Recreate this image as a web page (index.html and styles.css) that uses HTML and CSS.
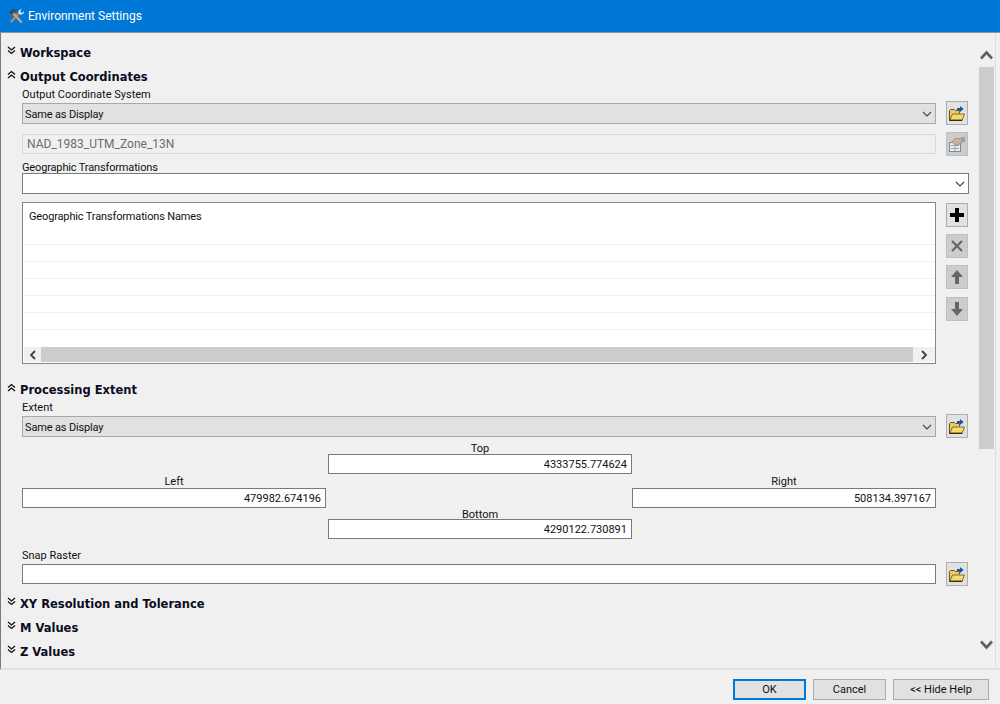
FILE: index.html
```html
<!DOCTYPE html>
<html lang="en">
<head>
<meta charset="utf-8">
<title>Environment Settings</title>
<link rel="stylesheet" href="styles.css">
</head>
<body>
<svg class="defs" width="0" height="0" aria-hidden="true">
  <defs>
    <symbol id="chev-down" viewBox="0 0 9 9"><path d="M1 1l3.500 3L8 1M1 4.500l3.500 3 3.500-3" fill="none" stroke="#111" stroke-width="1.300"/></symbol>
    <symbol id="chev-up" viewBox="0 0 9 9"><path d="M1 4.500l3.500-3L8 4.500M1 8l3.500-3L8 8" fill="none" stroke="#111" stroke-width="1.300"/></symbol>
    <symbol id="caret" viewBox="0 0 10 6"><path d="M1 1l4 4 4-4" fill="none" stroke="#444" stroke-width="1.100"/></symbol>
    <symbol id="folder" viewBox="0 0 16 15">
      <path d="M.5 14.500V4.500l1-1h4l1 1h4v3" fill="#e8cc70" stroke="#6b5210"/>
      <path d="M.8 14.500L3.500 8H15.500l-2.500 6.500z" fill="#f6da6c" stroke="#6b5210" stroke-width=".8"/>
      <path d="M.5 14.300h12.700" stroke="#3a2a06" stroke-width="1.400"/>
      <path d="M11 0l3.700 3L11 6V4.200H8V1.900h3z" fill="#0d5ba8"/>
    </symbol>
  </defs>
</svg>
<div class="window">
  <header class="titlebar">
    <svg class="app-icon" width="16" height="16" viewBox="0 0 17 17">
      <path d="M3 15L13 4" stroke="#b98a55" stroke-width="2.400"/>
      <path d="M14.500 15.500L5 5" stroke="#d8a070" stroke-width="2.400"/>
      <path d="M1 5l3-3.500h4.500L11 3 7 4 4.500 7z" fill="#44464a"/>
      <path d="M11.500 2.500l3-1.500-1.500 3 1.500 1.500 2.500-2c.3 2-1.500 4-4 3.500L11 5z" fill="#e8ecef"/>
    </svg>
    <span class="title">Environment Settings</span>
  </header>
  <div class="body">
    <main class="panel">
      <h2 class="section section-first"><svg class="chev"><use href="#chev-down"/></svg>Workspace</h2>
      <h2 class="section section-next"><svg class="chev"><use href="#chev-up"/></svg>Output Coordinates</h2>
      <div class="group">
        <div class="label label-top">Output Coordinate System</div>
        <div class="row">
          <div class="combo grey"><span class="tight">Same as Display</span><svg class="caret"><use href="#caret"/></svg></div>
          <button class="tool"><svg class="ico"><use href="#folder"/></svg></button>
        </div>
        <div class="row row-disabled">
          <div class="field disabled">NAD_1983_UTM_Zone_13N</div>
          <button class="tool off">
            <svg class="ico" viewBox="0 0 16 15">
              <rect x=".5" y="5.500" width="11" height="9" fill="#e6ecf0" stroke="#7f8a94"/>
              <path d="M2 8.500h8M2 11.500h8M6 6v8" stroke="#9aa6b0"/>
              <path d="M3 5l3-3.500h5l2-.5v5l-2 1-3 1.500-3-1.500z" fill="#c4b299" stroke="#8f8068" stroke-width=".6"/>
              <path d="M13 0h3v5h-3z" fill="#7ba9c8"/>
            </svg>
          </button>
        </div>
        <div class="label label-geo tight">Geographic Transformations</div>
        <div class="combo white wide"><span></span><svg class="caret"><use href="#caret"/></svg></div>
        <div class="row row-list">
          <div class="list">
            <div class="list-head tight">Geographic Transformations Names</div>
            <div class="list-line"></div>
            <div class="list-line"></div>
            <div class="list-line"></div>
            <div class="list-line"></div>
            <div class="list-line"></div>
            <div class="hscroll">
              <span class="hbtn hbtn-left"><svg width="8" height="10" viewBox="0 0 8 10"><path d="M6 1L2 5l4 4" fill="none" stroke="#404040" stroke-width="1.800"/></svg></span>
              <div class="hthumb"></div>
              <span class="hbtn hbtn-right"><svg width="8" height="10" viewBox="0 0 8 10"><path d="M2 1l4 4-4 4" fill="none" stroke="#404040" stroke-width="1.800"/></svg></span>
            </div>
          </div>
          <div class="tools">
            <button class="tool">
              <svg class="ico-lg" viewBox="0 0 18 18"><path d="M7 2h4v5h5v4h-5v5H7v-5H2V7h5z" fill="#000"/></svg>
            </button>
            <button class="tool off">
              <svg class="ico-lg" viewBox="0 0 18 18"><path d="M4 4l10 10M14 4L4 14" stroke="#666" stroke-width="2.200"/></svg>
            </button>
            <button class="tool off">
              <svg class="ico-lg" viewBox="0 0 18 18"><path d="M9 2l6 7h-4v7H7V9H3z" fill="#666"/></svg>
            </button>
            <button class="tool off tool-last">
              <svg class="ico-lg" viewBox="0 0 18 18"><path d="M9 16l6-7h-4V2H7v7H3z" fill="#666"/></svg>
            </button>
          </div>
        </div>
      </div>
      <h2 class="section section-extent"><svg class="chev"><use href="#chev-up"/></svg>Processing Extent</h2>
      <div class="group">
        <div class="label label-top">Extent</div>
        <div class="row">
          <div class="combo grey"><span class="tight">Same as Display</span><svg class="caret"><use href="#caret"/></svg></div>
          <button class="tool"><svg class="ico"><use href="#folder"/></svg></button>
        </div>
        <div class="extent">
          <div class="cell cell-top"><div class="cap">Top</div><div class="field num">4333755.774624</div></div>
          <div class="cell cell-left"><div class="cap">Left</div><div class="field num">479982.674196</div></div>
          <div class="cell cell-right"><div class="cap">Right</div><div class="field num">508134.397167</div></div>
          <div class="cell cell-bottom"><div class="cap">Bottom</div><div class="field num">4290122.730891</div></div>
        </div>
        <div class="label label-snap">Snap Raster</div>
        <div class="row">
          <div class="field snap"></div>
          <button class="tool"><svg class="ico"><use href="#folder"/></svg></button>
        </div>
      </div>
      <h2 class="section section-xy"><svg class="chev"><use href="#chev-down"/></svg>XY Resolution and Tolerance</h2>
      <h2 class="section section-next"><svg class="chev"><use href="#chev-down"/></svg>M Values</h2>
      <h2 class="section section-next"><svg class="chev"><use href="#chev-down"/></svg>Z Values</h2>
    </main>
    <aside class="vscroll">
      <svg class="varrow" width="15" height="10" viewBox="0 0 15 10"><path d="M2 8.500l5.500-6 5.500 6" fill="none" stroke="#606060" stroke-width="2.600"/></svg>
      <div class="vtrack"><div class="vthumb"></div></div>
      <svg class="varrow" width="15" height="10" viewBox="0 0 15 10"><path d="M2 1.500l5.500 6 5.500-6" fill="none" stroke="#606060" stroke-width="2.600"/></svg>
    </aside>
  </div>
  <footer class="footer">
    <button class="btn primary">OK</button>
    <button class="btn">Cancel</button>
    <button class="btn help">&lt;&lt; Hide Help</button>
  </footer>
</div>
</body>
</html>
```

FILE: styles.css
```css
* { box-sizing: border-box; }
html, body { margin: 0; height: 100%; }
body {
  width: 1000px;
  height: 704px;
  overflow: hidden;
  background: #f0f0f0;
  font-family: Roboto, "Noto Sans", sans-serif;
  font-size: 11px;
  color: #111;
}
.defs { position: absolute; }
.window { display: flex; flex-direction: column; height: 704px; }
.tight { letter-spacing: -0.150px; }

.titlebar {
  height: 33px;
  flex: none;
  display: flex;
  align-items: center;
  gap: 4px;
  padding: 0 0 0 8px;
  background: #0078d7;
  border-bottom: 1px solid #8a98a4;
  color: #fff;
}
.title { font-size: 12px; }

.body {
  height: 637px;
  flex: none;
  display: flex;
  border-left: 1px solid #7a7a7a;
  border-bottom: 2px solid #e2e2e2;
}
.panel { width: 975px; flex: none; padding: 0 0 0 6px; }

.section {
  margin: 0;
  display: flex;
  align-items: center;
  height: 14px;
  padding-top: 1px;
  font-family: "DejaVu Sans", sans-serif;
  font-size: 11.500px;
  font-weight: 700;
  color: #0b0b1e;
}
.section-first { margin-top: 12px; }
.section-next { margin-top: 10px; }
.section-extent { margin-top: 18px; }
.section-xy { margin-top: 10px; }
.chev { width: 9px; height: 9px; margin: -4px 4px 0 0; flex: none; }

.group { padding-left: 15px; }
.label { height: 14px; line-height: 14px; padding-top: 1px; }
.label-top { margin-top: 4px; }
.label-geo { margin-top: 4px; height: 13px; }
.label-snap { margin-top: 9px; }

.row { display: flex; align-items: flex-start; gap: 10px; }
.row > .combo, .row > .field { margin-top: 2px; }
.row-disabled { margin-top: 7px; }
.row-list { margin-top: 8px; }

.combo {
  width: 914px;
  height: 21px;
  display: flex;
  align-items: center;
  justify-content: space-between;
  padding: 0 3px 0 2px;
  border: 1px solid #a8a8a8;
}
.combo span { margin-top: 2px; }
.combo.grey { background: #e1e1e1; }
.combo.white { background: #fff; border-color: #7a7a7a; }
.combo.wide { width: 947px; }
.caret { width: 10px; height: 6px; flex: none; }

.field {
  height: 20px;
  background: #fff;
  border: 1px solid #7a7a7a;
  line-height: 20px;
  padding: 0 4px;
}
.field.disabled {
  width: 914px;
  background: #f0f0f0;
  border-color: #d9d9d9;
  color: #6d6d6d;
  font-size: 12px;
  line-height: 18px;
}
.field.snap { width: 914px; }
.field.num { text-align: right; }

.tool {
  width: 22px;
  height: 24px;
  flex: none;
  padding: 0;
  display: flex;
  align-items: center;
  justify-content: center;
  background: #e1e1e1;
  border: 1px solid #adadad;
}
.tool.off { background: #cccccc; border-color: #bfbfbf; }
.ico { width: 16px; height: 15px; }
.ico-lg { width: 18px; height: 18px; }

.list {
  width: 914px;
  height: 162px;
  background: #fff;
  border: 1px solid #828790;
  display: flex;
  flex-direction: column;
  padding: 0 0 1px 1px;
}
.list-head { height: 42px; padding: 7px 0 0 5px; line-height: 14px; border-bottom: 1px solid #f0f0f0; flex: none; }
.list-line { height: 17px; border-bottom: 1px solid #f0f0f0; flex: none; }
.hscroll {
  height: 15px;
  margin-top: auto;
  background: #f0f0f0;
  display: flex;
  align-items: stretch;
}
.hbtn { flex: none; display: flex; align-items: center; justify-content: center; }
.hbtn-left { width: 17px; }
.hbtn-right { width: 22px; }
.hthumb { flex: 1; background: #cdcdcd; }

.tools { display: flex; flex-direction: column; gap: 7px; margin-top: 1px; }
.tool-last { margin-top: 1px; }

.extent {
  width: 914px;
  margin-top: 4px;
  display: grid;
  grid-template-columns: 306px 304px 304px;
  grid-template-rows: 12px 20px 14px 20px 11px 20px;
}
.cell { display: contents; }
.cap { text-align: center; line-height: 12px; align-self: center; padding-top: 2px; }
.cell-top .cap { grid-column: 2; grid-row: 1; }
.cell-top .field { grid-column: 2; grid-row: 2; }
.cell-left .cap { grid-column: 1; grid-row: 3; width: 304px; }
.cell-left .field { grid-column: 1; grid-row: 4; width: 304px; }
.cell-right .cap { grid-column: 3; grid-row: 3; }
.cell-right .field { grid-column: 3; grid-row: 4; }
.cell-bottom .cap { grid-column: 2; grid-row: 5; }
.cell-bottom .field { grid-column: 2; grid-row: 6; }

.vscroll {
  width: 20px;
  flex: none;
  display: flex;
  flex-direction: column;
  align-items: flex-start;
  padding: 17px 0 0 3px;
  border-right: 1px solid #dedede;
}
.varrow { flex: none; }
.vtrack { width: 15px; height: 567px; margin-top: 7px; margin-bottom: 6px; }
.vthumb { height: 382px; background: #cdcdcd; }

.footer {
  flex: 1;
  display: flex;
  justify-content: flex-end;
  align-items: flex-start;
  gap: 7px;
  padding: 9px 11px 0 0;
}
.btn {
  height: 21px;
  width: 73px;
  padding: 0;
  background: #e1e1e1;
  border: 1px solid #adadad;
  font: inherit;
  color: #111;
}
.btn.primary { border: 2px solid #0078d7; }
.btn.help { width: 96px; }
```
